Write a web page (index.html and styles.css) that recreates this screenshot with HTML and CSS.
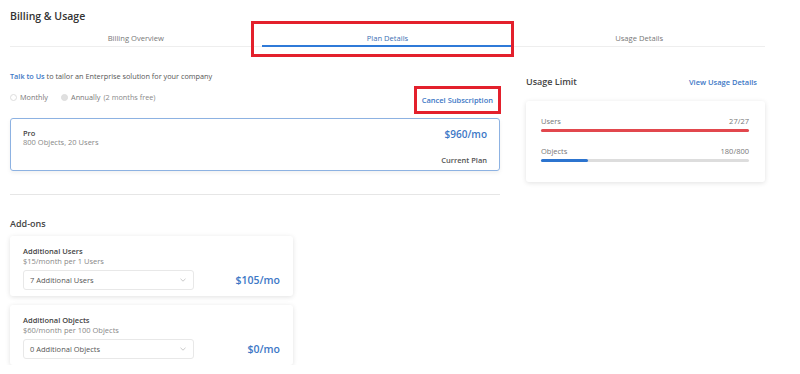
FILE: index.html
```html
<!DOCTYPE html>
<html>
	<head>
		<meta charset="UTF-8">
		<title>Billing &amp; Usage</title>
		<link rel="stylesheet" href="styles.css">
	</head>
	<body>
		<div class="page">
			<h1 class="title">Billing &amp; Usage</h1>
			<div class="tabs">
				<div class="tab">Billing Overview</div>
				<div class="tab active">Plan Details<span class="mark mark-tab"></span></div>
				<div class="tab">Usage Details</div>
			</div>

			<div class="main">
				<div class="left">
					<p class="talk"><a class="link">Talk to Us</a> to tailor an Enterprise solution for your company</p>
					<div class="billing-row">
						<div class="radios">
							<label class="radio"><span class="dot"></span>Monthly</label>
							<label class="radio"><span class="dot filled"></span>Annually <span class="muted">(2 months free)</span></label>
						</div>
						<a class="cancel">Cancel Subscription<span class="mark mark-cancel"></span></a>
					</div>

					<div class="plan">
						<div class="plan-info">
							<div class="name">Pro</div>
							<div class="sub">800 Objects, 20 Users</div>
						</div>
						<div class="plan-side">
							<div class="price big">$960/mo</div>
							<div class="current">Current Plan</div>
						</div>
					</div>

					<div class="divider"></div>

					<h2 class="section">Add-ons</h2>

					<div class="addon">
						<div class="name">Additional Users</div>
						<div class="sub">$15/month per 1 Users</div>
						<div class="addon-row">
							<div class="select">7 Additional Users<svg width="6" height="4" viewBox="0 0 6 4"><path d="M0.5 0.8 L3 3.2 L5.5 0.8" fill="none" stroke="#bbb" stroke-width="0.8"/></svg></div>
							<div class="price">$105/mo</div>
						</div>
					</div>

					<div class="addon">
						<div class="name">Additional Objects</div>
						<div class="sub">$60/month per 100 Objects</div>
						<div class="addon-row">
							<div class="select">0 Additional Objects<svg width="6" height="4" viewBox="0 0 6 4"><path d="M0.5 0.8 L3 3.2 L5.5 0.8" fill="none" stroke="#bbb" stroke-width="0.8"/></svg></div>
							<div class="price">$0/mo</div>
						</div>
					</div>
				</div>

				<div class="right">
					<div class="usage-head">
						<h2 class="section">Usage Limit</h2>
						<a class="view">View Usage Details</a>
					</div>
					<div class="usage">
						<div class="meter">
							<div class="meter-label"><span>Users</span><span>27/27</span></div>
							<div class="bar"><div class="fill red" style="width:100%"></div></div>
						</div>
						<div class="meter">
							<div class="meter-label"><span>Objects</span><span>180/800</span></div>
							<div class="bar"><div class="fill" style="width:22.5%"></div></div>
						</div>
					</div>
				</div>
			</div>
		</div>
	</body>
</html>
```

FILE: styles.css
```css
*{
	padding: 0px;
	margin: 0px;
	box-sizing: border-box;
}

body {
	background: #fff;
	font-family: "Open Sans", "Liberation Sans", sans-serif;
	color: #555;
	font-size: 7.3px;
}

.page {
	width: 765px;
	padding: 8px 0 0 10px;
}

.title {
	font-size: 10.5px;
	font-weight: 600;
	color: #333;
	line-height: 16px;
}

.tabs {
	display: grid;
	grid-template-columns: 1fr 1fr 1fr;
	border-bottom: 1px solid #eee;
	margin-top: 4px;
}

.tab {
	position: relative;
	text-align: center;
	font-size: 7.6px;
	color: #777;
	line-height: 12px;
	padding: 4px 0 1px;
}

.tab.active {
	color: #3d6fb3;
	border-bottom: 2px solid #2f7ad8;
	margin-bottom: -1px;
}

/* red annotation frames */
.mark {
	position: absolute;
	border: 3px solid #e3202c;
}

.mark-tab {
	left: -11px;
	right: -1px;
	top: -7px;
	bottom: -12px;
}

.mark-cancel {
	left: -8px;
	right: -8px;
	top: -8px;
	bottom: -8px;
}

.main {
	display: flex;
	gap: 26px;
}

.left {
	width: 490px;
}

.right {
	width: 239px;
}

.talk {
	margin-top: 23px;
	line-height: 12px;
	color: #555;
}

.link, .cancel, .view {
	color: #3d78c6;
	font-weight: 600;
}

.billing-row {
	display: flex;
	justify-content: space-between;
	align-items: flex-start;
	margin-top: 9px;
}

.radios {
	display: flex;
	gap: 13px;
	line-height: 12px;
	color: #777;
}

.radio {
	display: flex;
	align-items: center;
	gap: 3px;
}

.muted {
	color: #888;
}

.dot {
	width: 7px;
	height: 7px;
	border-radius: 50%;
	border: 1px solid #ddd;
}

.dot.filled {
	background: #e0e0e0;
}

.cancel {
	position: relative;
	line-height: 12px;
	margin-top: 3px;
	margin-right: 7px;
	font-size: 7.5px;
}

.plan {
	display: flex;
	justify-content: space-between;
	margin-top: 12px;
	height: 53px;
	border: 1px solid #8db2e2;
	border-radius: 3px;
	padding: 10px 12px 4px 12px;
	box-shadow: 0 2px 4px rgba(0, 0, 0, 0.06);
}

.name {
	color: #444;
	font-weight: 600;
	line-height: 10px;
	font-size: 7.5px;
}

.sub {
	color: #888;
	line-height: 10px;
	font-size: 7.5px;
}

.plan .name {
	line-height: 8px;
}

.plan-side {
	display: flex;
	flex-direction: column;
	align-items: flex-end;
	justify-content: space-between;
	margin-top: -2px;
}

.price {
	color: #3d78c6;
	font-weight: 600;
	font-size: 10.5px;
}

.price.big {
	font-size: 10px;
	line-height: 14px;
}

.current {
	color: #555;
	font-weight: 600;
	font-size: 7.5px;
	line-height: 11px;
}

.divider {
	border-top: 1px solid #e6e6e6;
	margin-top: 23px;
}

.section {
	font-size: 9px;
	font-weight: 600;
	color: #444;
	line-height: 14px;
}

.left .section {
	margin-top: 22px;
}

.addon {
	width: 283px;
	margin-top: 5px;
	padding: 10px 13px 6px;
	border-radius: 3px;
	box-shadow: 0 1px 5px rgba(0, 0, 0, 0.12);
}

.addon + .addon {
	margin-top: 9px;
}

.addon-row {
	display: flex;
	justify-content: space-between;
	align-items: center;
	margin-top: 4px;
}

.select {
	width: 171px;
	height: 20px;
	border: 1px solid #e8e8e8;
	border-radius: 3px;
	display: flex;
	justify-content: space-between;
	align-items: center;
	padding: 0 7px 0 6px;
	color: #555;
	font-size: 7.5px;
}

.usage-head {
	display: flex;
	justify-content: space-between;
	align-items: center;
	margin-top: 28px;
	padding-right: 8px;
}

.view {
	font-size: 7.5px;
}

.usage {
	margin-top: 12px;
	height: 81px;
	border-radius: 3px;
	box-shadow: 0 1px 5px rgba(0, 0, 0, 0.12);
	padding: 15px 16px 0 15px;
}

.meter + .meter {
	margin-top: 14px;
}

.meter-label {
	display: flex;
	justify-content: space-between;
	color: #777;
	font-size: 7.5px;
	line-height: 10px;
}

.bar {
	height: 3px;
	background: #ddd;
	margin-top: 3px;
	border-radius: 2px;
}

.fill {
	height: 3px;
	background: #2c74cf;
	border-radius: 2px;
}

.fill.red {
	background: #e2474d;
}
```
